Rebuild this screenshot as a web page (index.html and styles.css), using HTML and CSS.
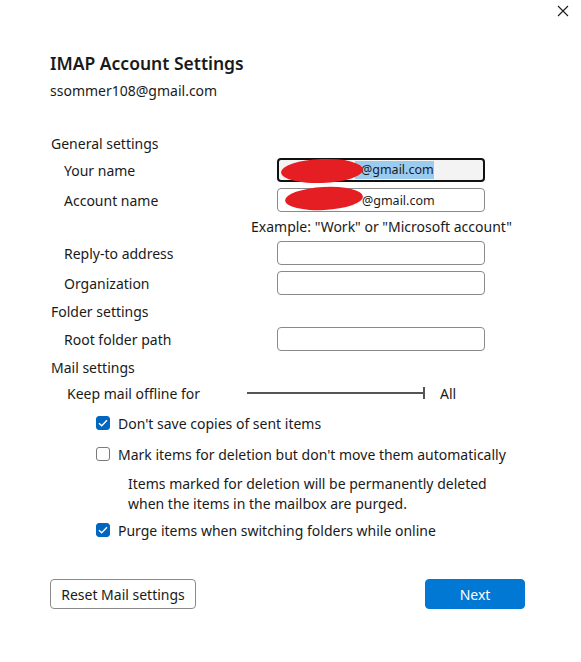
FILE: index.html
```html
<!DOCTYPE html>
<html>
<head>
<meta charset="utf-8">
<link rel="stylesheet" href="styles.css">
</head>
<body>
<div class="dialog">
  <button class="close" aria-label="Close">
    <svg width="12" height="12" viewBox="0 0 12 12"><path d="M1 1 L11 11 M11 1 L1 11" stroke="#1a1a1a" stroke-width="1.1" fill="none"/></svg>
  </button>
  <h1 class="title">IMAP Account Settings</h1>
  <div class="email">ssommer108@gmail.com</div>

  <div class="section s-general">General settings</div>
  <div class="row r-name">
    <span class="label">Your name</span>
    <div class="input focused"><span class="redact r1"></span><span class="sel">@gmail.com</span></div>
  </div>
  <div class="row r-account">
    <span class="label">Account name</span>
    <div class="input"><span class="redact r2"></span><span class="val">@gmail.com</span></div>
  </div>
  <div class="example">Example: "Work" or "Microsoft account"</div>
  <div class="row r-reply">
    <span class="label">Reply-to address</span>
    <div class="input"></div>
  </div>
  <div class="row r-org">
    <span class="label">Organization</span>
    <div class="input"></div>
  </div>
  <div class="section s-folder">Folder settings</div>
  <div class="row r-root">
    <span class="label">Root folder path</span>
    <div class="input"></div>
  </div>
  <div class="section s-mail">Mail settings</div>
  <div class="keep">
    <span class="keep-label">Keep mail offline for</span>
    <div class="slider"><span class="track"></span><span class="tick"></span></div>
    <span class="all">All</span>
  </div>
  <div class="check c1">
    <span class="box on"><svg width="10" height="8" viewBox="0 0 10 8"><path d="M1 4.2 L3.7 6.8 L9 1.3" stroke="#fff" stroke-width="1.4" fill="none"/></svg></span>
    <span>Don't save copies of sent items</span>
  </div>
  <div class="check c2">
    <span class="box"></span>
    <span>Mark items for deletion but don't move them automatically</span>
  </div>
  <div class="desc">Items marked for deletion will be permanently deleted<br>when the items in the mailbox are purged.</div>
  <div class="check c3">
    <span class="box on"><svg width="10" height="8" viewBox="0 0 10 8"><path d="M1 4.2 L3.7 6.8 L9 1.3" stroke="#fff" stroke-width="1.4" fill="none"/></svg></span>
    <span>Purge items when switching folders while online</span>
  </div>
  <div class="buttons">
    <button class="btn reset">Reset Mail settings</button>
    <button class="btn next">Next</button>
  </div>
</div>
</body>
</html>
```
FILE: styles.css
```css
* { box-sizing: border-box; }
html, body { margin: 0; padding: 0; background: #fff; }
body {
  font-family: "Noto Sans", "Open Sans", sans-serif;
  font-size: 14px;
  color: #1a1a1a;
  width: 581px;
  height: 662px;
  overflow: hidden;
}
.dialog { position: relative; padding: 51px 0 0 50px; }
.close {
  position: absolute; top: 5px; right: 12px;
  width: 12px; height: 12px; padding: 0; border: 0; background: none; display: block;
}
.close svg { display: block; }
.title {
  margin: 0; font-size: 17.5px; font-weight: 600; line-height: 24px; color: #1a1a1a;
}
.email { margin-top: 6px; line-height: 20px; font-size: 14px; }
.section { line-height: 20px; padding-left: 1px; }
.s-general { margin-top: 33px; }
.s-folder { margin-top: 7px; }
.s-mail { margin-top: 7px; }
.row { display: flex; align-items: center; height: 24px; }
.label { width: 227px; padding-left: 14px; }
.r-name { margin-top: 4px; }
.r-account { margin-top: 6px; }
.r-reply { margin-top: 4px; }
.r-org { margin-top: 6px; }
.r-root { margin-top: 5px; }
.input {
  position: relative;
  width: 208px; height: 24px;
  border: 1px solid #8a8a8a; border-radius: 4px;
  background: #fff;
  display: flex; align-items: center;
  font-size: 12.5px;
  padding-left: 84px;
}
.input.focused { border: 2px solid #111; background: #f3f3f3; padding-left: 76px; }
.sel { background: #9ccbf0; line-height: 18px; padding: 0 0 0 6px; }
.val { padding-left: 0; }
.redact {
  position: absolute; background: #e41e22; border-radius: 50% / 50%;
}
.r1 { left: 2px; top: -1px; width: 82px; height: 24px; transform: rotate(-2deg); }
.r2 { left: 7px; top: -2px; width: 78px; height: 23px; transform: rotate(-3deg); }
.example { margin-top: 5px; line-height: 20px; padding-left: 201px; }
.keep { margin-top: 5px; display: flex; align-items: center; height: 20px; }
.keep-label { width: 197px; padding-left: 17px; }
.slider { position: relative; width: 178px; height: 12px; }
.track { position: absolute; left: 0; right: 0; top: 5px; height: 2px; background: #555; }
.tick { position: absolute; right: 0; top: 0; width: 2px; height: 12px; background: #555; }
.all { margin-left: 15px; }
.check { display: flex; align-items: center; height: 20px; padding-left: 46px; }
.c1 { margin-top: 10px; }
.c2 { margin-top: 11px; }
.c3 { margin-top: 6px; }
.box {
  width: 14px; height: 14px; border-radius: 3px; border: 1px solid #7a7a7a;
  background: #fff; margin-right: 8px; display: flex; align-items: center; justify-content: center;
}
.box.on { background: #0067c0; border-color: #0067c0; }
.box svg { display: block; }
.desc { margin-top: 10px; padding-left: 78px; line-height: 20px; }
.buttons { margin-top: 39px; display: flex; justify-content: space-between; width: 475px; }
.btn {
  height: 30px; border-radius: 4px; font-family: inherit; font-size: 14px; padding: 0;
}
.reset { width: 146px; border: 1px solid #8a8a8a; background: #fff; color: #1a1a1a; }
.next { width: 100px; border: 1px solid #0078d4; background: #0078d4; color: #fff; }
```
